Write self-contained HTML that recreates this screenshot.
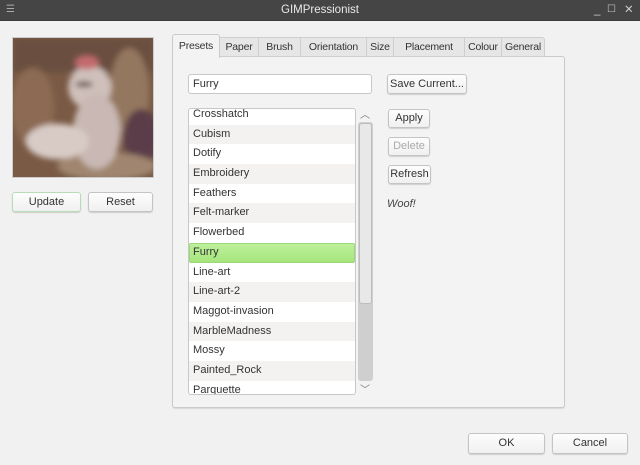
<!DOCTYPE html>
<html><head><style>
*{box-sizing:border-box;margin:0;padding:0}
body{width:640px;height:465px;background:#f1f1f1;font-family:"Liberation Sans","DejaVu Sans",sans-serif;font-size:11px;color:#333;position:relative;overflow:hidden}
.abs{position:absolute}
.title{left:0;top:0;width:640px;height:21px;background:#454545;border-bottom:1px solid #3a3a3a;color:#e8e8e8;text-align:center;line-height:20px;font-size:11.5px}
.btn{position:absolute;background:linear-gradient(#fdfdfd,#f0f0f0);border:1px solid #c4c4c4;border-radius:3px;box-shadow:0 1px 1px rgba(0,0,0,.15);text-align:center;color:#333;font-size:11px}
.tab{position:absolute;top:37px;height:20px;line-height:19px;background:#e6e6e6;border:1px solid #cfcfcf;border-left:none;text-align:center;color:#333;font-size:10.5px;letter-spacing:-0.2px}
.row{height:19.7px;line-height:19.7px;padding-left:4px;color:#333}
.row.g{background:#f3f2f1}
</style></head><body>
<div class="abs title">GIMPressionist
<span class="abs" style="left:6px;top:0;color:#aaa;font-size:10px">☰</span>
<span class="abs" style="left:594px;top:0;color:#ccc">_</span>
<span class="abs" style="left:607px;top:0;color:#ccc;font-size:10px">☐</span>
<span class="abs" style="left:624px;top:0;color:#ccc">✕</span>
</div>

<svg class="abs" style="left:12px;top:37px;border:1px solid #ccc" width="142" height="141" viewBox="0 0 142 141">
<defs><filter id="b"><feGaussianBlur stdDeviation="3"/></filter></defs>
<rect width="142" height="141" fill="#7a5a45"/>
<g filter="url(#b)">
<rect x="0" y="0" width="142" height="35" fill="#6a5040"/>
<ellipse cx="20" cy="70" rx="22" ry="40" fill="#8c6a52"/>
<ellipse cx="118" cy="55" rx="20" ry="45" fill="#94775f"/>
<ellipse cx="130" cy="100" rx="18" ry="28" fill="#5a3c4a"/>
<ellipse cx="95" cy="130" rx="50" ry="14" fill="#a08670"/>
<ellipse cx="78" cy="50" rx="22" ry="22" fill="#cfc0bb"/>
<ellipse cx="85" cy="95" rx="24" ry="38" fill="#c9b8b3"/>
<ellipse cx="45" cy="105" rx="32" ry="18" fill="#d8cbc6"/>
<ellipse cx="75" cy="25" rx="12" ry="7" fill="#c46a6e"/>
<ellipse cx="72" cy="47" rx="9" ry="3" fill="#6e5a55"/>
</g>
</svg>

<div class="btn" style="left:12px;top:192px;width:69px;height:20px;line-height:18px;border-color:#b8dcb8">Update</div>
<div class="btn" style="left:88px;top:192px;width:65px;height:20px;line-height:18px">Reset</div>

<div class="abs" style="left:172px;top:56px;width:393px;height:352px;border:1px solid #cacaca;border-radius:3px;background:#f3f3f3;box-shadow:0 1px 1px rgba(0,0,0,.1)"></div>
<div class="tab" style="left:172px;top:34px;width:48px;height:24px;background:#f3f3f3;border:1px solid #cacaca;border-bottom:none;border-radius:3px 3px 0 0;line-height:22px">Presets</div>
<div class="tab" style="left:220px;width:39px">Paper</div>
<div class="tab" style="left:259px;width:42px">Brush</div>
<div class="tab" style="left:301px;width:66px">Orientation</div>
<div class="tab" style="left:367px;width:27px">Size</div>
<div class="tab" style="left:394px;width:71px">Placement</div>
<div class="tab" style="left:465px;width:37px">Colour</div>
<div class="tab" style="left:502px;width:43px;border-radius:0 3px 0 0">General</div>

<div class="abs" style="left:188px;top:74px;width:184px;height:20px;background:#fff;border:1px solid #c8c8c8;border-radius:3px;padding-left:4px;line-height:18px">Furry</div>
<div class="btn" style="left:387px;top:74px;width:80px;height:20px;line-height:18px">Save Current...</div>

<div class="abs" style="left:188px;top:108px;width:168px;height:287px;background:#fff;border:1px solid #c8c8c8;border-radius:3px;overflow:hidden">
<div style="margin-top:-4px">
<div class="row">Crosshatch</div><div class="row g">Cubism</div><div class="row">Dotify</div><div class="row g">Embroidery</div><div class="row">Feathers</div><div class="row g">Felt-marker</div><div class="row">Flowerbed</div>
<div class="row" style="background:linear-gradient(#bdf09a,#a6e57c);border:1px solid #9bd67a;border-radius:2px;line-height:17.7px;padding-left:3px">Furry</div>
<div class="row">Line-art</div><div class="row g">Line-art-2</div><div class="row">Maggot-invasion</div><div class="row g">MarbleMadness</div><div class="row">Mossy</div><div class="row g">Painted_Rock</div><div class="row">Parquette</div>
</div></div>
<div class="abs" style="left:360px;top:106px;color:#777;font-size:10px">︿</div>
<div class="abs" style="left:358px;top:122px;width:15px;height:259px;background:#cfcfcf;border-radius:3px"></div>
<div class="abs" style="left:359px;top:123px;width:13px;height:181px;background:#e8e8e8;border:1px solid #bdbdbd;border-radius:3px"></div>
<div class="abs" style="left:360px;top:381px;color:#777;font-size:10px">﹀</div>

<div class="btn" style="left:388px;top:109px;width:42px;height:19px;line-height:17px">Apply</div>
<div class="btn" style="left:388px;top:137px;width:42px;height:19px;line-height:17px;color:#aaa">Delete</div>
<div class="btn" style="left:388px;top:165px;width:43px;height:19px;line-height:17px">Refresh</div>
<div class="abs" style="left:387px;top:198px;font-style:italic;color:#444">Woof!</div>

<div class="btn" style="left:468px;top:433px;width:77px;height:21px;line-height:19px">OK</div>
<div class="btn" style="left:552px;top:433px;width:76px;height:21px;line-height:19px">Cancel</div>
</body></html>
